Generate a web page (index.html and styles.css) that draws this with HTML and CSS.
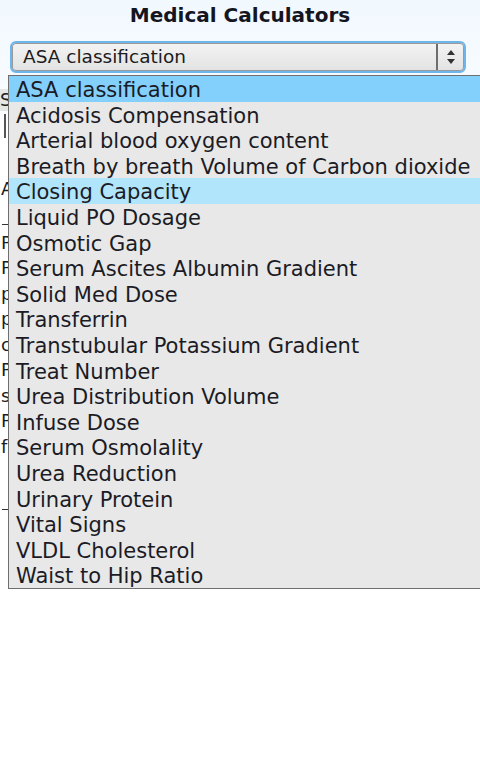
FILE: index.html
```html
<!DOCTYPE html>
<html>
<head>
<meta charset="utf-8">
<title>Medical Calculators</title>
<link rel="stylesheet" href="styles.css">
</head>
<body>
<div class="page">
  <h1 class="title">Medical Calculators</h1>
  <div class="picker">
    <div class="select">
      <span class="select-text">ASA classification</span>
      <span class="select-arrows">
        <svg width="10" height="18" viewBox="0 0 10 18"><path d="M5 2 L9 7 L1 7 Z M5 16 L9 11 L1 11 Z" fill="#333"/></svg>
      </span>
    </div>
    <ul class="options">
      <li class="opt selected">ASA classification</li>
      <li class="opt">Acidosis Compensation</li>
      <li class="opt">Arterial blood oxygen content</li>
      <li class="opt">Breath by breath Volume of Carbon dioxide</li>
      <li class="opt hover">Closing Capacity</li>
      <li class="opt">Liquid PO Dosage</li>
      <li class="opt">Osmotic Gap</li>
      <li class="opt">Serum Ascites Albumin Gradient</li>
      <li class="opt">Solid Med Dose</li>
      <li class="opt">Transferrin</li>
      <li class="opt">Transtubular Potassium Gradient</li>
      <li class="opt">Treat Number</li>
      <li class="opt">Urea Distribution Volume</li>
      <li class="opt">Infuse Dose</li>
      <li class="opt">Serum Osmolality</li>
      <li class="opt">Urea Reduction</li>
      <li class="opt">Urinary Protein</li>
      <li class="opt">Vital Signs</li>
      <li class="opt">VLDL Cholesterol</li>
      <li class="opt">Waist to Hip Ratio</li>
    </ul>
  </div>
  <div class="content">
    <div class="band">S</div>
    <div class="field"></div>
    <div class="line heading">A</div>
    <div class="rule"></div>
    <div class="line first">P</div>
    <div class="line">P</div>
    <div class="line">p</div>
    <div class="line">p</div>
    <div class="line">c</div>
    <div class="line">P</div>
    <div class="line">s</div>
    <div class="line">P</div>
    <div class="line">f</div>
    <div class="rule low"></div>
  </div>
</div>
</body>
</html>
```

FILE: styles.css
```css
html, body {
  margin: 0;
  padding: 0;
}
body {
  background: linear-gradient(#f1f8fe 0px, #f7fbff 80px, #ffffff 130px);
  min-height: 767px;
  font-family: "DejaVu Sans", Verdana, sans-serif;
  color: #1a1a1a;
}
.page {
  position: relative;
  width: 480px;
  height: 767px;
  overflow: hidden;
}
.title {
  margin: 0;
  padding-top: 3px;
  height: 38px;
  text-align: center;
  font-size: 20px;
  line-height: 24px;
  font-weight: bold;
  color: #15151f;
}
.picker {
  margin: 0 14px 0 10px;
}
.select {
  box-sizing: border-box;
  height: 32px;
  border: 2px solid #6db6ec;
  border-radius: 6px;
  display: flex;
  align-items: stretch;
  background: linear-gradient(#f4f4f4, #e2e2e2);
  box-shadow: inset 0 0 0 1px #9a9a9a;
}
.select-text {
  flex: 1;
  padding-left: 11px;
  font-size: 18.5px;
  line-height: 27px;
  color: #1c1c1c;
}
.select-arrows {
  width: 26px;
  border-left: 2px solid #6e6e6e;
  margin: 1px 0;
  display: flex;
  align-items: center;
  justify-content: center;
}
.options {
  position: absolute;
  left: 8px;
  top: 75px;
  width: 490px;
  margin: 0;
  padding: 0;
  list-style: none;
  background: #e8e8e8;
  border: 1px solid #6f6f6f;
  z-index: 2;
}
.opt {
  height: 25.6px;
  line-height: 28px;
  padding-left: 7px;
  font-size: 21px;
  color: #1b1b25;
  white-space: nowrap;
  overflow: visible;
}
.opt.selected {
  background: #83d0fd;
}
.opt.hover {
  background: #b1e5fc;
}
.content {
  width: 8px;
  overflow: hidden;
  padding-top: 16px;
  font-size: 18px;
  color: #1d1d1d;
}
.band {
  background: #e6e6e6;
  line-height: 22px;
  height: 22px;
  overflow: hidden;
}
.field {
  margin: 3px 0 0 4px;
  height: 24px;
  width: 4px;
  border-left: 2px solid #555;
}
.line {
  height: 25.5px;
  line-height: 25.5px;
  white-space: nowrap;
  padding-left: 1px;
}
.heading {
  margin-top: 38px;
}
.rule {
  margin: 22px 0 0 2px;
  height: 1px;
  background: #333;
  width: 8px;
}
.line.first {
  margin-top: 5px;
}
.rule.low {
  margin-top: 50px;
}
```
